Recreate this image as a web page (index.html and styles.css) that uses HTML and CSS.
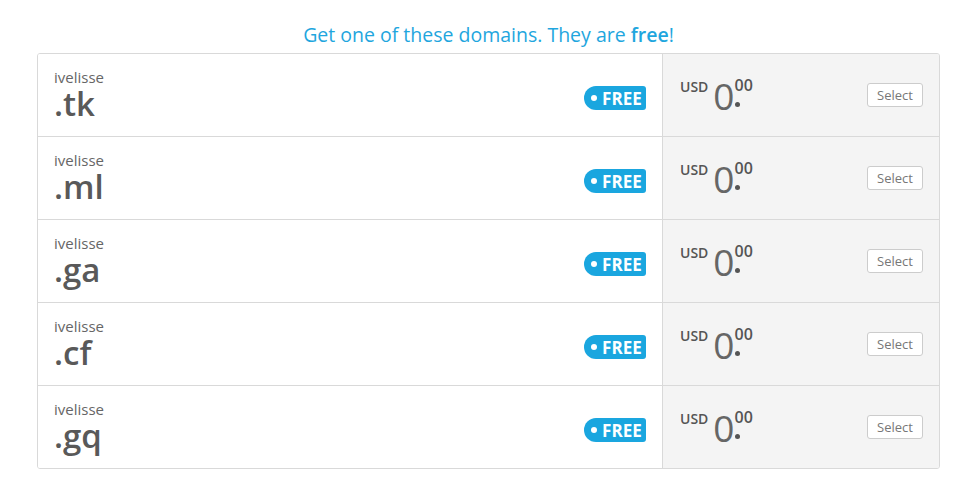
FILE: index.html
```html
<!DOCTYPE html>
<html>
<head>
<meta charset="utf-8">
<link rel="stylesheet" href="styles.css">
</head>
<body>
<div class="page">
  <h2 class="title">Get one of these domains. They are <b>free</b>!</h2>
  <div class="list">
    <div class="row">
      <div class="name-cell">
        <div class="name"><span class="sld">ivelisse</span><span class="tld">.tk</span></div>
        <span class="badge"><span class="dot"></span>FREE</span>
      </div>
      <div class="price-cell">
        <div class="price"><span class="cur">USD</span><span class="int">0</span><span class="cents"><span class="sup">00</span><span class="pt"></span></span></div>
        <button class="select">Select</button>
      </div>
    </div>
    <div class="row">
      <div class="name-cell">
        <div class="name"><span class="sld">ivelisse</span><span class="tld">.ml</span></div>
        <span class="badge"><span class="dot"></span>FREE</span>
      </div>
      <div class="price-cell">
        <div class="price"><span class="cur">USD</span><span class="int">0</span><span class="cents"><span class="sup">00</span><span class="pt"></span></span></div>
        <button class="select">Select</button>
      </div>
    </div>
    <div class="row">
      <div class="name-cell">
        <div class="name"><span class="sld">ivelisse</span><span class="tld">.ga</span></div>
        <span class="badge"><span class="dot"></span>FREE</span>
      </div>
      <div class="price-cell">
        <div class="price"><span class="cur">USD</span><span class="int">0</span><span class="cents"><span class="sup">00</span><span class="pt"></span></span></div>
        <button class="select">Select</button>
      </div>
    </div>
    <div class="row">
      <div class="name-cell">
        <div class="name"><span class="sld">ivelisse</span><span class="tld">.cf</span></div>
        <span class="badge"><span class="dot"></span>FREE</span>
      </div>
      <div class="price-cell">
        <div class="price"><span class="cur">USD</span><span class="int">0</span><span class="cents"><span class="sup">00</span><span class="pt"></span></span></div>
        <button class="select">Select</button>
      </div>
    </div>
    <div class="row">
      <div class="name-cell">
        <div class="name"><span class="sld">ivelisse</span><span class="tld">.gq</span></div>
        <span class="badge"><span class="dot"></span>FREE</span>
      </div>
      <div class="price-cell">
        <div class="price"><span class="cur">USD</span><span class="int">0</span><span class="cents"><span class="sup">00</span><span class="pt"></span></span></div>
        <button class="select">Select</button>
      </div>
    </div>
  </div>
</div>
</body>
</html>
```
FILE: styles.css
```css
* { box-sizing: border-box; }
html, body { margin: 0; padding: 0; background: #fff; }
body { font-family: "Open Sans", "Liberation Sans", sans-serif; color: #555; }
.page { width: 903px; padding-top: 22px; margin-left: 37px; }
.title {
  margin: 0 0 5px;
  text-align: center;
  font-size: 19.5px;
  font-weight: 400;
  line-height: 26px;
  color: #1fa6de;
}
.title b { font-weight: 600; }
.list {
  border: 1px solid #d9d9d9;
  border-radius: 3px;
  overflow: hidden;
}
.row {
  display: flex;
  height: 83px;
  border-top: 1px solid #d9d9d9;
}
.row:first-child { border-top: 0; height: 82px; }
.name-cell {
  flex: 0 0 625px;
  display: flex;
  align-items: center;
  justify-content: space-between;
  padding: 0 16px 0 16px;
  background: #fff;
  border-right: 1px solid #d9d9d9;
}
.name { display: flex; flex-direction: column; margin-top: -1px; }
.sld { font-size: 15px; line-height: 18px; color: #666; }
.tld { font-size: 33px; line-height: 36px; font-weight: 600; color: #595959; }
.badge {
  display: inline-flex;
  align-items: center;
  height: 24px;
  padding: 0 4px 0 7px;
  background: #1aa6df;
  color: #fff;
  font-weight: 700;
  font-size: 17px;
  letter-spacing: 0.1px;
  border-radius: 12px 3px 3px 12px;
  margin-top: 6px;
  margin-right: 0;
}
.badge .dot {
  width: 6px; height: 6px; border-radius: 50%;
  background: #fff; margin-right: 5px;
}
.price-cell {
  flex: 1;
  display: flex;
  align-items: center;
  justify-content: space-between;
  padding: 0 16px 0 17px;
  background: #f4f4f4;
}
.price { display: flex; align-items: flex-start; color: #555; margin-top: 2px; }
.cur { font-size: 14px; font-weight: 600; line-height: 16px; margin-top: 0; margin-right: 5px; color: #555; }
.int { font-size: 37px; line-height: 34px; color: #666; }
.cents { display: flex; flex-direction: column; align-items: flex-start; }
.sup { font-size: 16px; line-height: 14px; font-weight: 600; color: #555; margin-top: -1px; }
.pt {
  width: 5px; height: 5px; border-radius: 50%;
  background: #555;
  margin-top: 10px; margin-left: 0;
}
.select {
  font-family: "Open Sans", "Liberation Sans", sans-serif;
  font-size: 13px;
  color: #777;
  background: #fff;
  border: 1px solid #ccc;
  border-radius: 3px;
  height: 24px;
  width: 56px;
  padding: 0;
  margin-top: -1px;
}
```
